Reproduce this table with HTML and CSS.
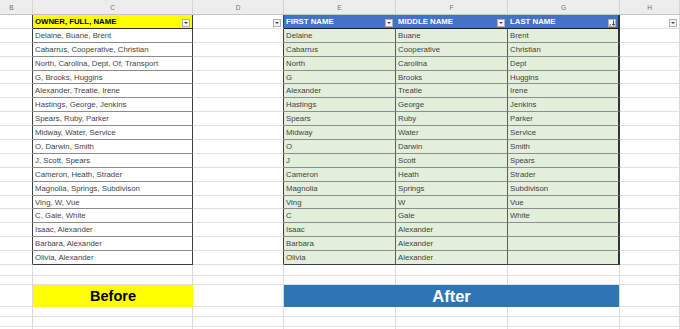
FILE: index.html
```html
<!DOCTYPE html>
<html>
<head>
<meta charset="utf-8">
<link rel="stylesheet" href="styles.css">
</head>
<body>
<div class="sheet">
  <div class="row hdr">
    <div class="c ch chb">B</div><div class="c ch">C</div><div class="c ch">D</div><div class="c ch">E</div><div class="c ch">F</div><div class="c ch">G</div><div class="c ch">H</div>
  </div>
  <div class="row">
    <div class="c lb"></div>
    <div class="c tc yh">OWNER, FULL, NAME<span class="dd"></span></div>
    <div class="c rb">&nbsp;<span class="dd"></span></div>
    <div class="c bh">FIRST NAME<span class="dd"></span></div>
    <div class="c bh">MIDDLE NAME<span class="dd"></span></div>
    <div class="c bh gl">LAST NAME<span class="dd sort"><svg width="6" height="6" viewBox="0 0 6 6"><path d="M4.5 0.5V5.2M3.2 4L4.5 5.4L5.8 4" stroke="#333" stroke-width="0.9" fill="none"/><path d="M0.5 5H2" stroke="#333" stroke-width="0.9"/></svg></span></div>
    <div class="c">&nbsp;<span class="dd"></span></div>
  </div>
  <div class="row"><div class="c lb"></div><div class="c tc">Delaine, Buane, Brent</div><div class="c rb"></div><div class="c gc">Delaine</div><div class="c gc">Buane</div><div class="c gc gl">Brent</div><div class="c"></div></div>
  <div class="row"><div class="c lb"></div><div class="c tc">Cabarrus, Cooperative, Christian</div><div class="c rb"></div><div class="c gc">Cabarrus</div><div class="c gc">Cooperative</div><div class="c gc gl">Christian</div><div class="c"></div></div>
  <div class="row"><div class="c lb"></div><div class="c tc">North, Carolina, Dept, Of, Transport</div><div class="c rb"></div><div class="c gc">North</div><div class="c gc">Carolina</div><div class="c gc gl">Dept</div><div class="c"></div></div>
  <div class="row"><div class="c lb"></div><div class="c tc">G, Brooks, Huggins</div><div class="c rb"></div><div class="c gc">G</div><div class="c gc">Brooks</div><div class="c gc gl">Huggins</div><div class="c"></div></div>
  <div class="row"><div class="c lb"></div><div class="c tc">Alexander, Treatie, Irene</div><div class="c rb"></div><div class="c gc">Alexander</div><div class="c gc">Treatie</div><div class="c gc gl">Irene</div><div class="c"></div></div>
  <div class="row"><div class="c lb"></div><div class="c tc">Hastings, George, Jenkins</div><div class="c rb"></div><div class="c gc">Hastings</div><div class="c gc">George</div><div class="c gc gl">Jenkins</div><div class="c"></div></div>
  <div class="row"><div class="c lb"></div><div class="c tc">Spears, Ruby, Parker</div><div class="c rb"></div><div class="c gc">Spears</div><div class="c gc">Ruby</div><div class="c gc gl">Parker</div><div class="c"></div></div>
  <div class="row"><div class="c lb"></div><div class="c tc">Midway, Water, Service</div><div class="c rb"></div><div class="c gc">Midway</div><div class="c gc">Water</div><div class="c gc gl">Service</div><div class="c"></div></div>
  <div class="row"><div class="c lb"></div><div class="c tc">O, Darwin, Smith</div><div class="c rb"></div><div class="c gc">O</div><div class="c gc">Darwin</div><div class="c gc gl">Smith</div><div class="c"></div></div>
  <div class="row"><div class="c lb"></div><div class="c tc">J, Scott, Spears</div><div class="c rb"></div><div class="c gc">J</div><div class="c gc">Scott</div><div class="c gc gl">Spears</div><div class="c"></div></div>
  <div class="row"><div class="c lb"></div><div class="c tc">Cameron, Heath, Strader</div><div class="c rb"></div><div class="c gc">Cameron</div><div class="c gc">Heath</div><div class="c gc gl">Strader</div><div class="c"></div></div>
  <div class="row"><div class="c lb"></div><div class="c tc">Magnolia, Springs, Subdivison</div><div class="c rb"></div><div class="c gc">Magnolia</div><div class="c gc">Springs</div><div class="c gc gl">Subdivison</div><div class="c"></div></div>
  <div class="row"><div class="c lb"></div><div class="c tc">Ving, W, Vue</div><div class="c rb"></div><div class="c gc">Ving</div><div class="c gc">W</div><div class="c gc gl">Vue</div><div class="c"></div></div>
  <div class="row"><div class="c lb"></div><div class="c tc">C, Gale, White</div><div class="c rb"></div><div class="c gc">C</div><div class="c gc">Gale</div><div class="c gc gl">White</div><div class="c"></div></div>
  <div class="row"><div class="c lb"></div><div class="c tc">Isaac, Alexander</div><div class="c rb"></div><div class="c gc">Isaac</div><div class="c gc">Alexander</div><div class="c gc gl"></div><div class="c"></div></div>
  <div class="row"><div class="c lb"></div><div class="c tc">Barbara, Alexander</div><div class="c rb"></div><div class="c gc">Barbara</div><div class="c gc">Alexander</div><div class="c gc gl"></div><div class="c"></div></div>
  <div class="row last"><div class="c lb"></div><div class="c tc">Olivia, Alexander</div><div class="c rb"></div><div class="c gc">Olivia</div><div class="c gc">Alexander</div><div class="c gc gl"></div><div class="c"></div></div>
  <div class="row g1"><div class="c"></div><div class="c"></div><div class="c"></div><div class="c"></div><div class="c"></div><div class="c"></div><div class="c"></div></div>
  <div class="row g2"><div class="c"></div><div class="c"></div><div class="c"></div><div class="c"></div><div class="c"></div><div class="c"></div><div class="c"></div></div>
  <div class="row bar"><div class="c"></div><div class="c bef">Before</div><div class="c"></div><div class="c aft">After</div><div class="c"></div></div>
  <div class="row g3"><div class="c"></div><div class="c"></div><div class="c"></div><div class="c"></div><div class="c"></div><div class="c"></div><div class="c"></div></div>
  <div class="row g3"><div class="c"></div><div class="c"></div><div class="c"></div><div class="c"></div><div class="c"></div><div class="c"></div><div class="c"></div></div>
  <div class="row g3"><div class="c"></div><div class="c"></div><div class="c"></div><div class="c"></div><div class="c"></div><div class="c"></div><div class="c"></div></div>
</div>
</body>
</html>
```

FILE: styles.css
```css
html, body {
  margin: 0;
  padding: 0;
  background: #ffffff;
}
body {
  font-family: "Liberation Sans", Arial, sans-serif;
}
.sheet {
  width: 680px;
  height: 329px;
  overflow: hidden;
}
.row {
  display: grid;
  grid-template-columns: 33px 160px 91px 112px 112px 112px 60px;
  height: 13.9px;
}
.c {
  position: relative;
  box-sizing: border-box;
  border-right: 1px solid #dadada;
  border-bottom: 1px solid #e1e1e1;
  font-size: 7.8px;
  line-height: 14px;
  padding-left: 2px;
  color: #444444;
  white-space: nowrap;
  overflow: hidden;
}
.hdr {
  height: 15px;
  background: #ededed;
}
.ch {
  padding: 0;
  text-align: center;
  font-size: 6.5px;
  line-height: 15px;
  color: #6f6f6f;
  border-right-color: #d4d4d4;
  border-bottom-color: #c6c6c6;
}
.chb {
  padding-right: 9px;
}
.lb {
  border-right-color: #3d3d3d;
}
.tc {
  border-right-color: #3d3d3d;
  border-bottom-color: #8c8c8c;
}
.yh {
  background: #ffff00;
  color: #000;
  font-weight: bold;
  border-bottom-color: #2e2e2e;
}
.rb {
  border-right-color: #3d3d3d;
}
.bh {
  background: #4472c4;
  color: #ffffff;
  font-weight: bold;
  border-right-color: #4472c4;
  border-bottom-color: #1d1d1d;
}
.gc {
  background: #e2efda;
  border-right-color: #5c5c5c;
  border-bottom-color: #8e8e8e;
}
.gl {
  border-right: 2px solid #333333;
}
.last .tc,
.last .gc {
  border-bottom-color: #3d3d3d;
}
.dd {
  position: absolute;
  right: 2px;
  top: 4px;
  width: 8px;
  height: 8px;
  box-sizing: border-box;
  border: 1px solid #b0b0b0;
  background: #f4f4f4;
  display: flex;
  align-items: center;
  justify-content: center;
}
.dd::after {
  content: "";
  width: 0;
  height: 0;
  border-left: 2px solid transparent;
  border-right: 2px solid transparent;
  border-top: 2px solid #444;
}
.sort::after {
  display: none;
}
.g1 {
  height: 11px;
}
.g2 {
  height: 9px;
}
.bar {
  height: 22px;
}
.g3 {
  height: 10px;
}
.bef {
  background: #ffff00;
  color: #000;
  font-weight: bold;
  font-size: 14.5px;
  line-height: 22px;
  text-align: center;
  padding: 0;
  border: none;
}
.aft {
  grid-column: span 3;
  background: #2e75b6;
  color: #ffffff;
  font-weight: bold;
  font-size: 16.5px;
  line-height: 22px;
  text-align: center;
  padding: 0;
  border: none;
  border-right: 1px solid #dadada;
}
```
